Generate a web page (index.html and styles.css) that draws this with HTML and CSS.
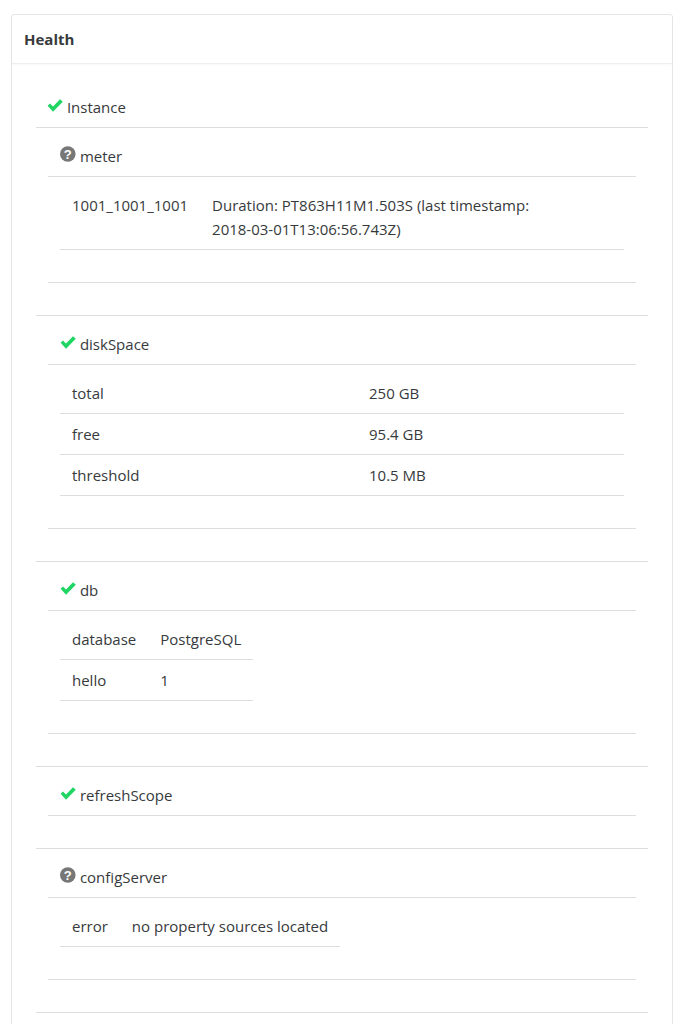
FILE: index.html
```html
<!doctype html>
<html>
  <head>
    <meta charset="UTF-8" />
    <meta name="viewport" content="width=device-width, initial-scale=1.0" />
    <title>Health</title>
    <link rel="stylesheet" href="styles.css">
  </head>
  <body>
    <div class="card">
      <div class="card-header">Health</div>
      <div class="card-body">
        <div class="instance-title">
          <svg class="icon" viewBox="0 0 16 16"><path class="icon-ok" d="M0.6 8.8 L3 6.4 L6 9.4 L13 2.2 L15.8 4.8 L6 14.8 Z" /></svg>
          Instance
        </div>

        <div class="health-item">
          <div class="item-title">
            <svg class="icon" viewBox="0 0 16 16"><circle class="icon-unknown" cx="7.8" cy="8" r="7.8" /><text class="icon-mark" x="7.8" y="12.6" text-anchor="middle">?</text></svg>
            meter
          </div>
          <div class="item-details">
            <table class="details-table table-wide">
              <tr>
                <td>1001_1001_1001</td>
                <td>Duration: PT863H11M1.503S (last timestamp: <span class="timestamp">2018-03-01T13:06:56.743Z)</span></td>
              </tr>
            </table>
          </div>
        </div>

        <div class="health-item">
          <div class="item-title">
            <svg class="icon" viewBox="0 0 16 16"><path class="icon-ok" d="M0.6 8.8 L3 6.4 L6 9.4 L13 2.2 L15.8 4.8 L6 14.8 Z" /></svg>
            diskSpace
          </div>
          <div class="item-details">
            <table class="details-table table-wide table-disk">
              <tr><td>total</td><td>250 GB</td></tr>
              <tr><td>free</td><td>95.4 GB</td></tr>
              <tr><td>threshold</td><td>10.5 MB</td></tr>
            </table>
          </div>
        </div>

        <div class="health-item">
          <div class="item-title">
            <svg class="icon" viewBox="0 0 16 16"><path class="icon-ok" d="M0.6 8.8 L3 6.4 L6 9.4 L13 2.2 L15.8 4.8 L6 14.8 Z" /></svg>
            db
          </div>
          <div class="item-details">
            <table class="details-table">
              <tr><td>database</td><td>PostgreSQL</td></tr>
              <tr><td>hello</td><td>1</td></tr>
            </table>
          </div>
        </div>

        <div class="health-item">
          <div class="item-title">
            <svg class="icon" viewBox="0 0 16 16"><path class="icon-ok" d="M0.6 8.8 L3 6.4 L6 9.4 L13 2.2 L15.8 4.8 L6 14.8 Z" /></svg>
            refreshScope
          </div>
        </div>

        <div class="health-item">
          <div class="item-title">
            <svg class="icon" viewBox="0 0 16 16"><circle class="icon-unknown" cx="7.8" cy="8" r="7.8" /><text class="icon-mark" x="7.8" y="12.6" text-anchor="middle">?</text></svg>
            configServer
          </div>
          <div class="item-details">
            <table class="details-table">
              <tr><td>error</td><td>no property sources located</td></tr>
            </table>
          </div>
        </div>
      </div>
    </div>
  </body>
</html>
```

FILE: styles.css
```css
html,
body {
  height: 1024px;
  overflow: hidden;
}

body {
  font-family: "Open Sans", "Noto Sans", sans-serif;
  font-size: 15px;
  line-height: 24px;
  margin: 0;
  padding: 14px 24px 0 11px;
  background: #fff;
  color: #373a3c;
}

.card {
  border: 1px solid #e6e6e6;
  border-radius: 3px;
  min-height: 1100px;
}

.card-header {
  font-weight: 700;
  padding: 12px;
  border-bottom: 1px solid #eee;
  box-shadow: 0 1px 2px rgba(0, 0, 0, 0.03);
}

.card-body {
  padding: 15px 24px 0;
}

.instance-title,
.item-title {
  padding: 16px 12px 8px;
  border-bottom: 1px solid #ddd;
}

.instance-title {
  padding-left: 11px;
}

.health-item {
  padding: 0 12px 32px;
  border-bottom: 1px solid #ddd;
}

.item-details {
  padding: 8px 12px 32px;
  border-bottom: 1px solid #ddd;
}

.icon {
  width: 16px;
  height: 16px;
}

.icon-ok {
  fill: #21d565;
}

.icon-unknown {
  fill: #777;
}

.icon-mark {
  fill: #fff;
  font-family: "Liberation Sans", sans-serif;
  font-size: 13px;
  font-weight: 700;
}

.details-table {
  border-collapse: collapse;
}

.table-wide {
  width: 100%;
}

.table-disk td:first-child {
  width: 273px;
}

.details-table td {
  padding: 8px 12px;
  border-bottom: 1px solid #ddd;
  vertical-align: top;
}

.timestamp {
  white-space: nowrap;
}
```
